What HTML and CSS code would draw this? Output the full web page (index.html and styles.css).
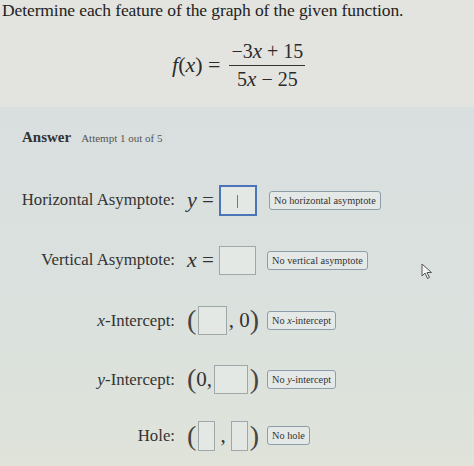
FILE: index.html
```html
<!DOCTYPE html>
<html>
<head>
<meta charset="utf-8">
<link rel="stylesheet" href="styles.css">
</head>
<body>
<div class="top">
  <div class="title">Determine each feature of the graph of the given function.</div>
  <div class="formula">
    <span class="m"><i>f</i>(<i>x</i>) =</span>
    <span class="frac">
      <span class="num">−3<i>x</i> + 15</span>
      <span class="den">5<i>x</i> − 25</span>
    </span>
  </div>
</div>
<div class="answer">
  <div class="head"><span class="ans">Answer</span><span class="att">Attempt 1 out of 5</span></div>
  <div class="rows">
    <div class="row r1">
      <div class="label">Horizontal Asymptote:</div>
      <div class="expr"><span class="m"><i>y</i> =</span><span class="box focus"><span class="caret"></span></span></div>
      <button class="btn b1">No horizontal asymptote</button>
    </div>
    <div class="row r2">
      <div class="label">Vertical Asymptote:</div>
      <div class="expr"><span class="m"><i>x</i> =</span><span class="box"></span></div>
      <button class="btn">No vertical asymptote</button>
    </div>
    <div class="row r3">
      <div class="label"><i>x</i>-Intercept:</div>
      <div class="expr"><span class="par">(</span><span class="box sm"></span><span class="m">, 0</span><span class="par">)</span></div>
      <button class="btn">No <i>x</i>-intercept</button>
    </div>
    <div class="row r4">
      <div class="label"><i>y</i>-Intercept:</div>
      <div class="expr"><span class="par">(</span><span class="m">0,</span><span class="box sm"></span><span class="par">)</span></div>
      <button class="btn">No <i>y</i>-intercept</button>
    </div>
    <div class="row r5">
      <div class="label">Hole:</div>
      <div class="expr"><span class="par">(</span><span class="box xs"></span><span class="m comma">,</span><span class="box xs"></span><span class="par">)</span></div>
      <button class="btn">No hole</button>
    </div>
  </div>
  <svg class="cursor" width="12" height="17" viewBox="0 0 12 17"><path d="M1 1 L1 13 L4 10 L6.5 15.5 L8.5 14.5 L6 9.5 L10.5 9.5 Z" fill="#f2f4f2" stroke="#555" stroke-width="1"/></svg>
</div>
</body>
</html>
```
FILE: styles.css
```css
html, body { margin: 0; padding: 0; }
body {
  width: 474px; height: 466px; overflow: hidden;
  font-family: "Liberation Serif", serif;
  color: #2b2b2b;
  background: #dfe3de;
}
i { font-family: "Liberation Serif", serif; font-style: italic; }
.top {
  height: 107px;
  background: #e3e4e0;
  box-sizing: border-box;
  padding-left: 2px;
  padding-top: 1px;
}
.title {
  font-size: 17.5px;
  line-height: 18px;
  color: #222;
  letter-spacing: -0.1px;
}
.formula {
  display: flex;
  align-items: center;
  padding-left: 170px;
  margin-top: 20px;
}
.formula .m { font-size: 22px; margin-right: 9px; white-space: pre; }
.formula .m i { font-size: 22px; }
.frac { display: flex; flex-direction: column; align-items: center; font-size: 20px; }
.frac i { font-size: 21px; }
.num { padding: 0 2px 2px; border-bottom: 1.5px solid #333; line-height: 24px; }
.den { line-height: 24px; padding-top: 1px; }
.answer {
  position: relative;
  height: 359px;
  background: linear-gradient(#d9dfdf, #dbe1dd 60%, #dfe3da);
}
.head { padding: 22px 0 0 22px; display: flex; align-items: baseline; gap: 10px; }
.ans { font-weight: bold; font-size: 15px; color: #333; }
.att { font-size: 11px; color: #555; }
.rows { display: flex; flex-direction: column; }
.row { display: flex; align-items: center; height: 60px; }
.r1 { margin-top: 24px; }
.r4 { height: 58px; }
.r5 { height: 55px; }
.label {
  width: 175px; box-sizing: border-box; text-align: right;
  font-size: 16.8px; color: #333;
}
.label i { font-size: 17.5px; }
.expr { width: 84px; display: flex; align-items: center; padding-left: 12px; box-sizing: border-box; }
.expr .m { font-size: 21px; color: #333; white-space: pre; }
.expr .m i { font-size: 22px; }
.par { font-size: 28px; color: #444; line-height: 28px; }
.box {
  width: 37px; height: 29px; border: 1px solid #9ea8a8; background: #e4e8e4;
  box-sizing: border-box; margin-left: 5px; position: relative;
}
.box.focus { border: 2px solid #4a75b8; width: 38px; height: 31px; }
.caret { position: absolute; left: 16px; top: 8px; width: 1px; height: 13px; background: #777; }
.box.sm { width: 35px; margin-left: 2px; margin-right: 2px; }
.r4 .box.sm { width: 34px; }
.box.xs { width: 19px; height: 30px; margin: 0 2px; }
.comma { padding: 0 3px; }
.btn {
  margin-left: 8px;
  font-family: "Liberation Serif", serif; font-size: 10.3px; color: #333;
  background: #e4e9e8; border: 1px solid #8d9daa; border-radius: 3px;
  padding: 2px 4px; height: 19px; line-height: 13px;
}
.b1 { margin-left: 10px; }
.btn i { font-size: 10.3px; }
.cursor { position: absolute; left: 421px; top: 156px; }
```
